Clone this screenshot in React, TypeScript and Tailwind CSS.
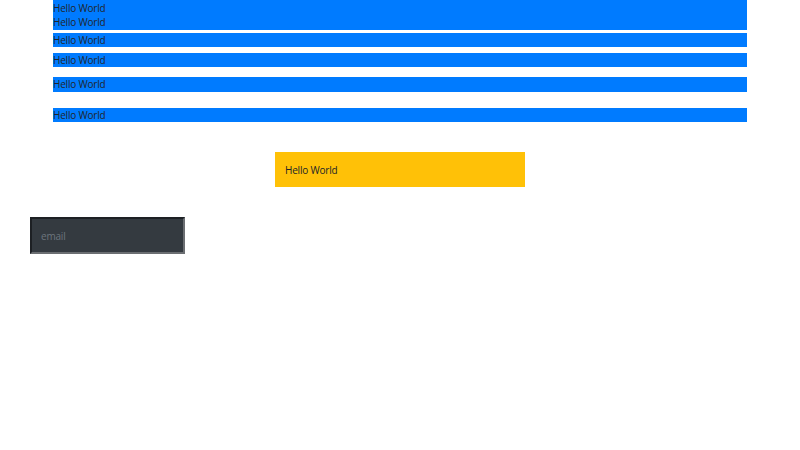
export default function App() {
  return (
    <div className="min-h-[450px] bg-white font-['Open_Sans',sans-serif] text-[10px] tracking-[-0.2px] text-[#212529]">
      <div className="px-[53px] leading-[14.75px]">
        <div className="bg-[#007bff] pt-[1px] pb-[-1px]">
          <div>Hello World</div>
          <div className="-mt-[1px]">Hello World</div>
        </div>
        <div className="mt-[3px] bg-[#007bff]">Hello World</div>
        <div className="mt-[5.25px] bg-[#007bff]">Hello World</div>
        <div className="mt-[9.75px] bg-[#007bff]">Hello World</div>
        <div className="mt-[15.75px] bg-[#007bff]">Hello World</div>
      </div>

      <div className="mx-auto mt-[30px] flex h-[35px] w-[250px] items-center bg-[#ffc107] px-[10px] pt-[1px]">
        Hello World
      </div>

      <div className="mt-[30px] pl-[30px]">
        <input
          type="text"
          placeholder="email"
          className="h-[37px] w-[155px] border-2 border-t-[#1d2024] border-l-[#1d2024] border-r-[#6b6e72] border-b-[#6b6e72] bg-[#343a40] px-[9px] pt-[1px] text-[10px] text-white outline-none placeholder:text-[#6c757d]"
        />
      </div>
    </div>
  );
}
